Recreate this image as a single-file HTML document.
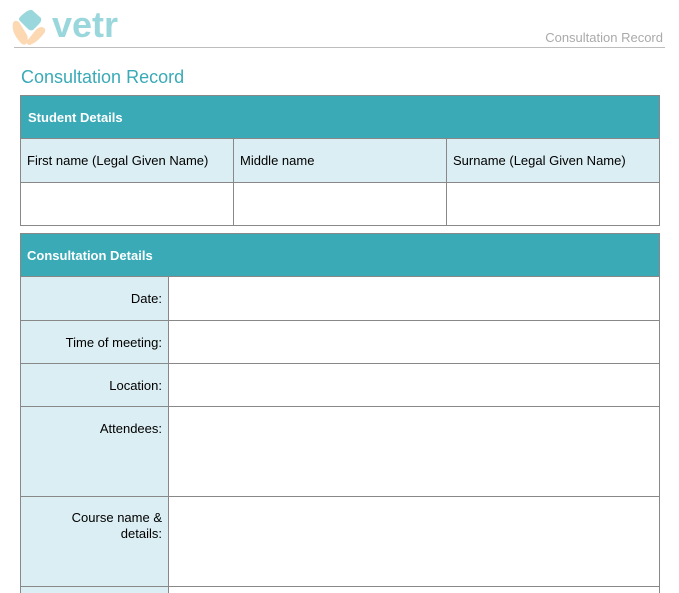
<!DOCTYPE html>
<html><head><meta charset="utf-8"><style>
html,body{margin:0;background:#fff;font-family:"Liberation Sans",Arial,sans-serif;width:679px;height:593px;overflow:hidden;position:relative}
.abs{position:absolute}
.hl{position:absolute;left:14px;top:47px;width:651px;height:1px;background:#bdbdbd}
.box{position:absolute;box-sizing:border-box;border:1px solid #888}
.hd{background:#3aaab7;color:#fff;font-weight:bold;font-size:13px}
.lt{background:#dbeef3}
.t{font-size:13px;color:#000;position:absolute}
</style></head><body>
<svg class="abs" style="left:0;top:0" width="50" height="47" viewBox="0 0 50 47">
<path d="M20 17 Q28 9 32 10 L41 18 Q42 21 39 24 L33 30 Q30 31 28 29 L20 21 Q18 19 20 17Z" fill="#9ad7dc"/>
<path d="M13 23 Q15 19 19 22 L27 35 Q29 40 26 44 Q23 46 20 42 Q11 32 13 23Z" fill="#fcd8b3"/>
<path d="M42 27 Q46 28 45 32 Q38 42 30 45 Q26 45 27 41 L35 31 Q38 27 42 27Z" fill="#fcd8b3"/>
</svg>
<div class="abs" style="left:52px;top:4px;font-size:36px;font-weight:bold;color:#9ad7dc">vetr</div>
<div class="abs" style="right:16px;top:30px;font-size:13px;color:#aaa">Consultation Record</div>
<div class="hl"></div>
<div class="abs" style="left:21px;top:67px;font-size:18px;color:#3aaab7">Consultation Record</div>

<div class="box hd" style="left:20px;top:95px;width:640px;height:44px"><span class="abs" style="left:7px;top:14px">Student Details</span></div>
<div class="box lt" style="left:20px;top:138px;width:214px;height:45px"><span class="t" style="left:6px;top:14px">First name (Legal Given Name)</span></div>
<div class="box lt" style="left:233px;top:138px;width:214px;height:45px"><span class="t" style="left:6px;top:14px">Middle name</span></div>
<div class="box lt" style="left:446px;top:138px;width:214px;height:45px"><span class="t" style="left:6px;top:14px">Surname (Legal Given Name)</span></div>
<div class="box" style="left:20px;top:182px;width:214px;height:44px"></div>
<div class="box" style="left:233px;top:182px;width:214px;height:44px"></div>
<div class="box" style="left:446px;top:182px;width:214px;height:44px"></div>

<div class="box hd" style="left:20px;top:233px;width:640px;height:44px"><span class="abs" style="left:6px;top:14px">Consultation Details</span></div>

<div class="box lt" style="left:20px;top:276px;width:149px;height:45px"><span class="t" style="right:6px;top:14px">Date:</span></div>
<div class="box" style="left:168px;top:276px;width:492px;height:45px"></div>
<div class="box lt" style="left:20px;top:320px;width:149px;height:44px"><span class="t" style="right:6px;top:14px">Time of meeting:</span></div>
<div class="box" style="left:168px;top:320px;width:492px;height:44px"></div>
<div class="box lt" style="left:20px;top:363px;width:149px;height:44px"><span class="t" style="right:6px;top:14px">Location:</span></div>
<div class="box" style="left:168px;top:363px;width:492px;height:44px"></div>
<div class="box lt" style="left:20px;top:406px;width:149px;height:91px"><span class="t" style="right:6px;top:14px">Attendees:</span></div>
<div class="box" style="left:168px;top:406px;width:492px;height:91px"></div>
<div class="box lt" style="left:20px;top:496px;width:149px;height:91px"><span class="t" style="right:6px;top:13px;text-align:right;line-height:16px">Course name &amp;<br>details:</span></div>
<div class="box" style="left:168px;top:496px;width:492px;height:91px"></div>
<div class="box lt" style="left:20px;top:586px;width:149px;height:7px;border-bottom:none"></div>
<div class="box" style="left:168px;top:586px;width:492px;height:7px;border-bottom:none"></div>
</body></html>
